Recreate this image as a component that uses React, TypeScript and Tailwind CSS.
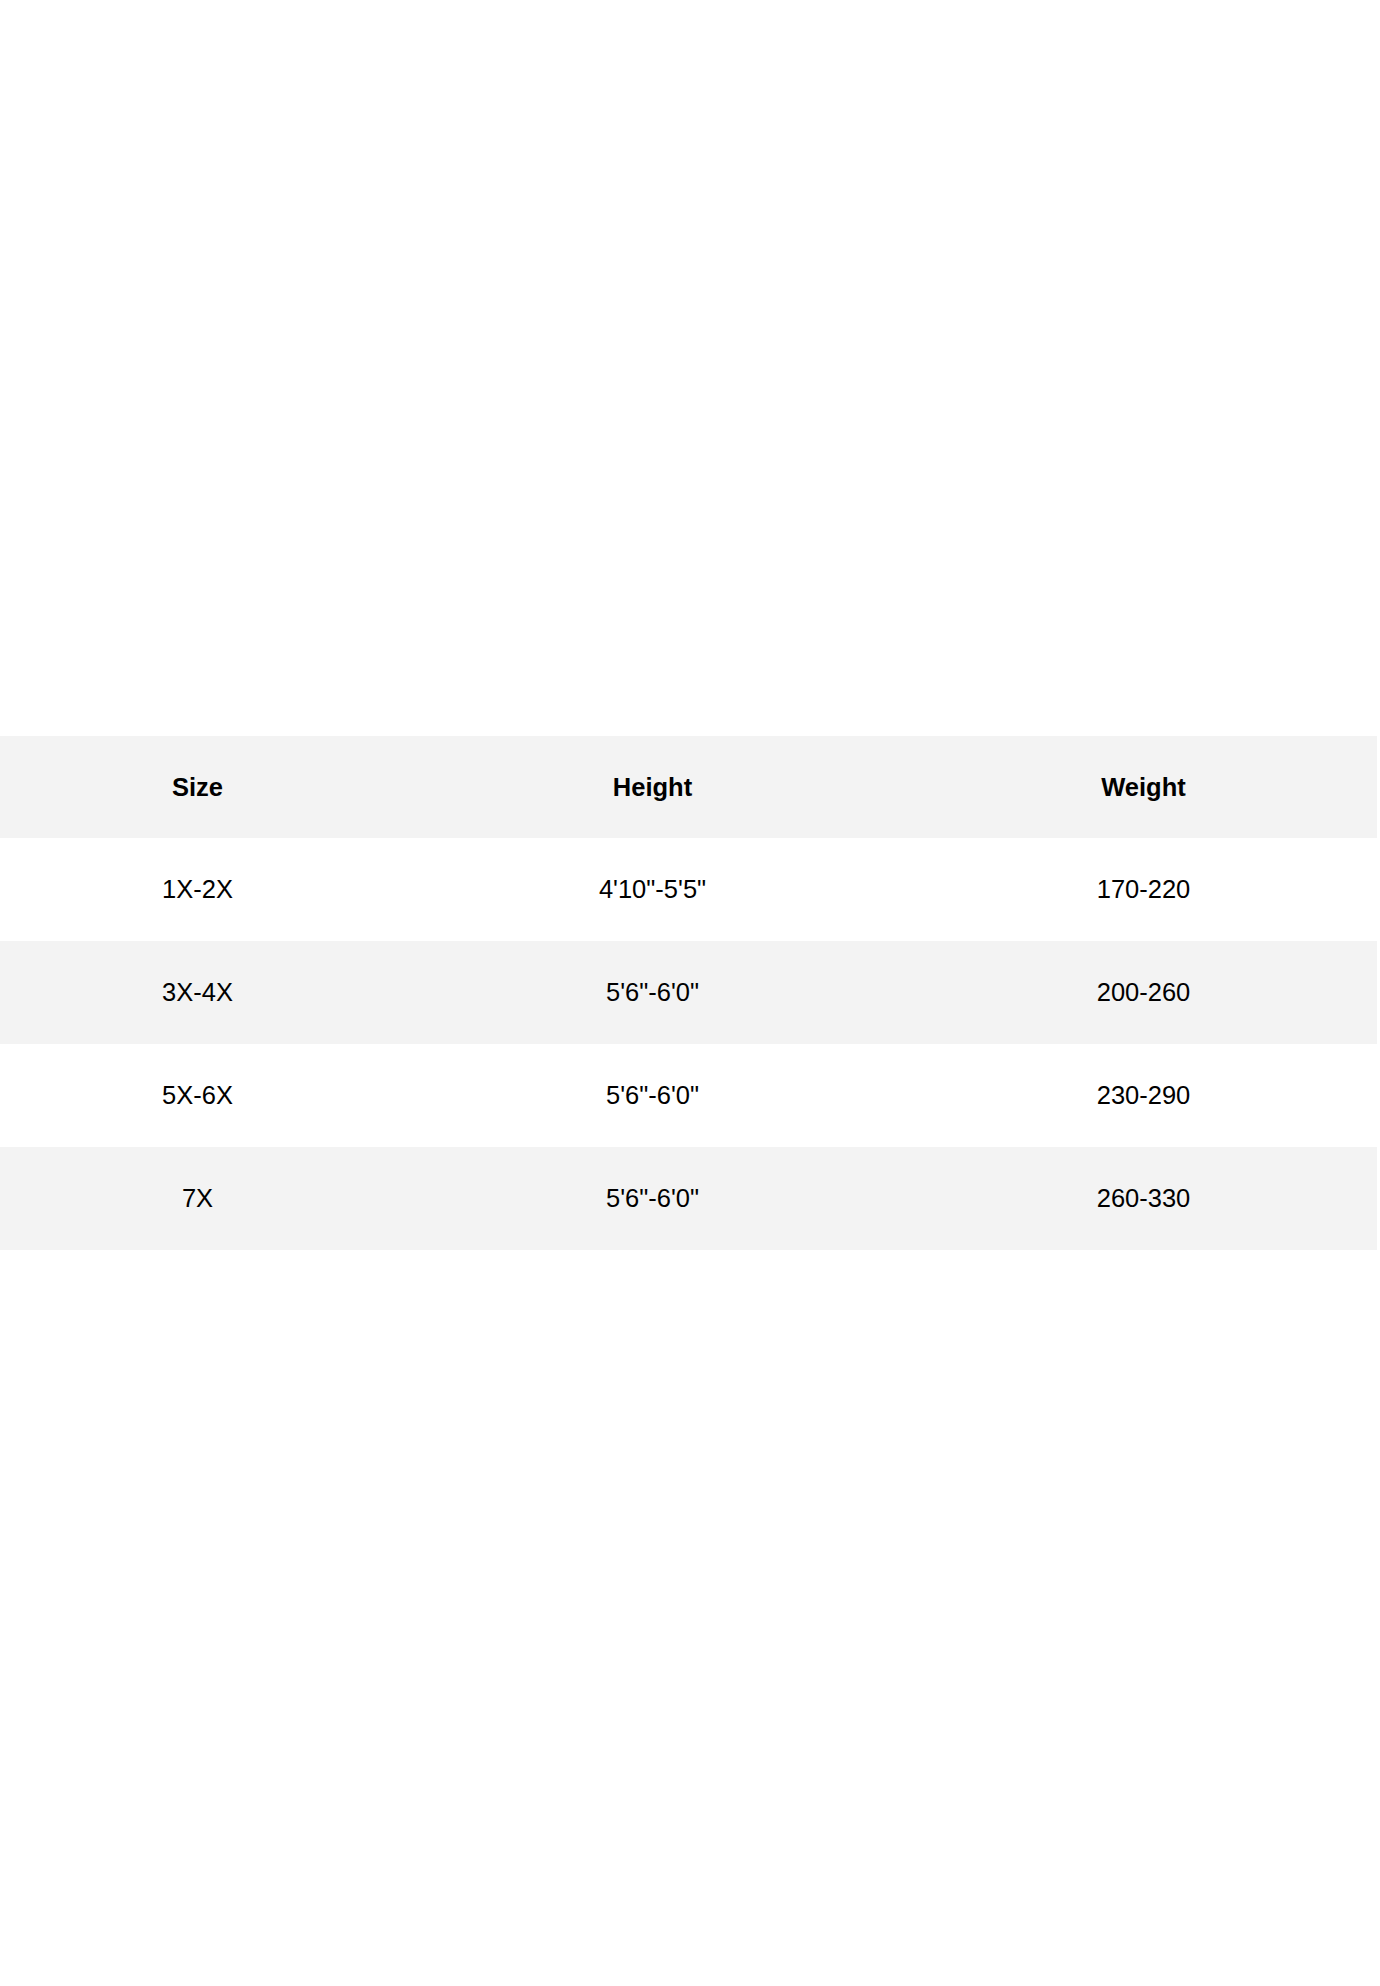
const rows = [
  { size: "1X-2X", height: `4'10"-5'5"`, weight: "170-220" },
  { size: "3X-4X", height: `5'6"-6'0"`, weight: "200-260" },
  { size: "5X-6X", height: `5'6"-6'0"`, weight: "230-290" },
  { size: "7X", height: `5'6"-6'0"`, weight: "260-330" },
];

export default function App() {
  return (
    <div className="min-h-[1986px] bg-white pt-[736px] font-['Liberation_Sans',Arial,sans-serif] text-[25.5px] text-black">
      <table className="w-[1377px] table-fixed border-collapse">
        <colgroup>
          <col className="w-[395px]" />
          <col className="w-[515px]" />
          <col className="w-[467px]" />
        </colgroup>
        <thead>
          <tr className="h-[102px] bg-[#f3f3f3]">
            <th className="text-center font-bold">Size</th>
            <th className="text-center font-bold">Height</th>
            <th className="text-center font-bold">Weight</th>
          </tr>
        </thead>
        <tbody>
          {rows.map((r, i) => (
            <tr
              key={r.size}
              className={i % 2 === 1 ? "h-[103px] bg-[#f3f3f3]" : "h-[103px] bg-white"}
            >
              <td className="text-center">{r.size}</td>
              <td className="text-center">{r.height}</td>
              <td className="text-center">{r.weight}</td>
            </tr>
          ))}
        </tbody>
      </table>
    </div>
  );
}
